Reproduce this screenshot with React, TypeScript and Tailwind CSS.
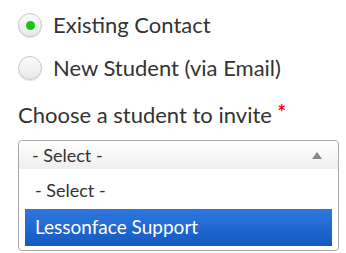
import React from 'react';

function Radio({ checked }: { checked?: boolean }) {
  return (
    <span className="flex h-[24px] w-[24px] shrink-0 items-center justify-center rounded-full border border-[#c8c8c8] bg-gradient-to-b from-[#fafafa] to-[#e9e9e9] shadow-[0_1px_1px_rgba(0,0,0,0.12)]">
      {checked && <span className="h-[9px] w-[9px] rounded-full bg-[#19c419]" />}
    </span>
  );
}

export default function App() {
  return (
    <div className="h-[253px] w-[346px] overflow-hidden bg-white pl-[18px] pt-[13px] text-[#333] [font-family:Lato,'Liberation_Sans',sans-serif]">
      <label className="flex items-center gap-[11px] text-[22px] leading-[24px]">
        <Radio checked />
        Existing Contact
      </label>
      <label className="mt-[19px] flex items-center gap-[11px] text-[22px] leading-[24px]">
        <Radio />
        New Student (via Email)
      </label>
      <div className="mt-[23px] text-[22px] leading-[24px]">
        Choose a student to invite <span className="relative -top-[3px] text-[20px] font-bold text-[#e00]">*</span>
      </div>

      {/* chosen-style dropdown, open */}
      <div className="mt-[13px] w-[321px] rounded-[4px] border border-[#aaa] bg-white">
        <div className="flex h-[28px] items-center justify-between rounded-t-[4px] bg-gradient-to-b from-white to-[#eee] pl-[13px] pr-[16px] text-[18px]">
          <span>- Select -</span>
          <span className="h-0 w-0 border-x-[5px] border-b-[7px] border-x-transparent border-b-[#888]" />
        </div>
        <ul className="pb-[4px] pl-[6px] pr-[6px] pt-[2px] text-[18px]">
          <li className="flex h-[38px] items-center pl-[10px]">- Select -</li>
          <li className="flex h-[37px] items-center bg-gradient-to-b from-[#2f78e0] to-[#1558c2] pl-[10px] text-[19px] text-white">
            Lessonface Support
          </li>
        </ul>
      </div>
    </div>
  );
}
